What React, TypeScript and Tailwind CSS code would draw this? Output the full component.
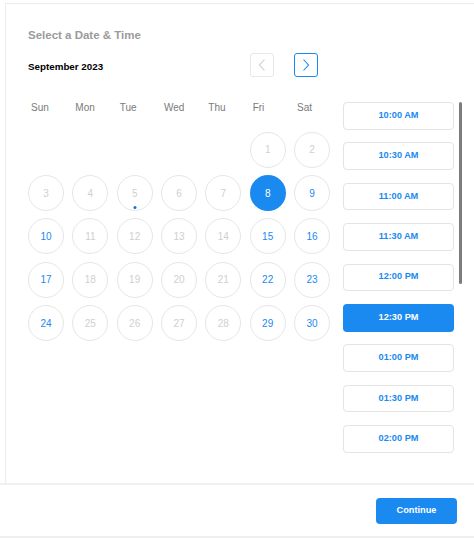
const days = ["Sun", "Mon", "Tue", "Wed", "Thu", "Fri", "Sat"];
const available = [9, 10, 15, 16, 17, 22, 23, 24, 29, 30];
const slots = ["10:00 AM", "10:30 AM", "11:00 AM", "11:30 AM", "12:00 PM", "12:30 PM", "01:00 PM", "01:30 PM", "02:00 PM"];

const Chevron = ({ dir }: { dir: "left" | "right" }) => (
    <svg width="8" height="14" viewBox="0 0 8 14" fill="none" stroke="currentColor" strokeWidth="1.1">
        {dir === "left" ? <polyline points="6.5,1.5 1.5,7 6.5,12.5" /> : <polyline points="1.5,1.5 6.5,7 1.5,12.5" />}
    </svg>
);

const DayCell = ({ day }: { day: number }) => {
    if (day === 8) {
        return (
            <div className="w-[36px] h-[36px] rounded-full bg-[#1a89f0] text-white flex items-center justify-center text-[10px]">
                8
            </div>
        );
    }
    const open = available.includes(day);
    return (
        <div
            className={`relative w-[36px] h-[36px] rounded-full border border-[#e6e6e6] flex items-center justify-center text-[10px] ${
                open ? "text-[#1a89f0]" : "text-[#cfcfcf]"
            }`}
        >
            {day}
            {day === 5 && <span className="absolute bottom-[1px] left-1/2 -translate-x-1/2 w-[3px] h-[3px] rounded-full bg-[#1a6fd0]" />}
        </div>
    );
};

export default function App() {
    const cells: (number | null)[] = [null, null, null, null, null];
    for (let d = 1; d <= 30; d++) cells.push(d);

    return (
        <div className="w-[474px] h-[540px] bg-white font-['Liberation_Sans',Arial,sans-serif]">
            <div className="ml-[5px] mt-[3px] h-[480px] border-l border-t border-[#ededed] pl-[22px] pt-[23px]">
                <h1 className="text-[11.5px] leading-[16px] font-bold text-[#9b9b9b]">Select a Date &amp; Time</h1>

                <div className="mt-[10px] flex items-center h-[24px]">
                    <span className="w-[222px] pt-[4px] text-[9.8px] font-bold text-black">September 2023</span>
                    <button className="w-[24px] h-[24px] rounded-[3px] border border-[#e8e8e8] flex items-center justify-center text-[#cccccc]">
                        <Chevron dir="left" />
                    </button>
                    <button className="ml-[20px] w-[24px] h-[24px] rounded-[3px] border border-[#1a89f0] flex items-center justify-center text-[#1a89f0]">
                        <Chevron dir="right" />
                    </button>
                </div>

                <div className="mt-[22px] flex items-start">
                    <div className="w-[302px]">
                        <div className="grid grid-cols-7 gap-x-[8.33px] h-[16px] items-center">
                            {days.map((d) => (
                                <span key={d} className="pl-[3px] text-[10px] text-[#7a7a7a]">
                                    {d}
                                </span>
                            ))}
                        </div>
                        <div className="mt-[16.7px] grid grid-cols-7 gap-x-[8.33px] gap-y-[7.33px]">
                            {cells.map((d, i) => (d === null ? <div key={i} /> : <DayCell key={i} day={d} />))}
                        </div>
                    </div>

                    <div className="ml-[13px] mt-[3px] flex flex-col gap-[12.8px]">
                        {slots.map((s) => (
                            <button
                                key={s}
                                className={`w-[111px] h-[27.6px] rounded-[4px] text-[9.2px] font-bold ${
                                    s === "12:30 PM"
                                        ? "bg-[#1a89f0] text-white"
                                        : "border border-[#e4e4e4] text-[#1a89f0] bg-white"
                                }`}
                            >
                                {s}
                            </button>
                        ))}
                    </div>
                    <div className="ml-[5px] mt-[3px] w-[3px] h-[182px] rounded-full bg-[#7d7d7d]" />
                </div>
            </div>

            <div className="h-[55px] border-t-2 border-b-2 border-[#f0f0f0] flex items-center justify-end pr-[17px]">
                <button className="w-[81px] h-[26px] rounded-[4px] bg-[#1a89f0] text-white text-[9.2px] font-bold">
                    Continue
                </button>
            </div>
        </div>
    );
}
